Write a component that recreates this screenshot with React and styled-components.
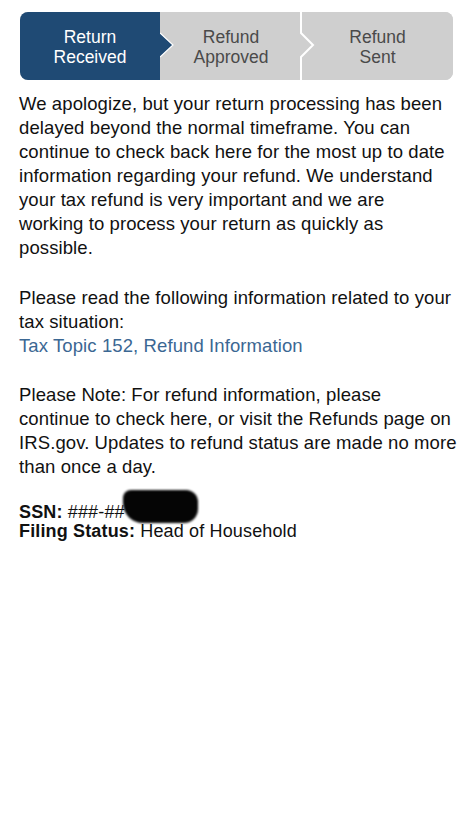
import React from 'react';
import styled, { createGlobalStyle } from 'styled-components';

const Global = createGlobalStyle`
  html, body { margin: 0; padding: 0; background: #fff; }
  body { font-family: "Liberation Sans", Arial, sans-serif; color: #111; }
`;

const Page = styled.div`
  width: 474px;
  min-height: 816px;
  padding: 12px 19px 0 19px;
  box-sizing: border-box;
`;

const Stepper = styled.div`
  display: flex;
  height: 68px;
  margin-left: 1px;
  width: 433px;
  border-radius: 8px;
  overflow: hidden;
  background: #cfcfcf;
`;

const Step = styled.div`
  position: relative;
  flex: ${p => (p.grow ? '1' : `0 0 ${p.w}px`)};
  display: flex;
  align-items: center;
  justify-content: center;
  text-align: center;
  font-size: 17.5px;
  line-height: 20px;
  padding-top: 2px;
  box-sizing: border-box;
  background: ${p => (p.active ? '#1f4a74' : '#cfcfcf')};
  color: ${p => (p.active ? '#fff' : '#4a4a4a')};
`;

const Chevron = styled.svg`
  position: absolute;
  top: 0;
  left: ${p => p.x}px;
  z-index: 2;
`;

const Body = styled.div`
  font-size: 18.5px;
  letter-spacing: 0.1px;
  line-height: 24px;
  margin-top: 12px;
  white-space: nowrap;
`;

const Para = styled.p`
  margin: 0 0 ${p => p.gap || 26}px 0;
`;

const Link = styled.a`
  color: #3b6793;
  text-decoration: none;
`;

const Info = styled.div`
  font-size: 18px;
  letter-spacing: 0.15px;
  line-height: 19px;
  margin-top: -2px;
  white-space: nowrap;
`;

const Label = styled.b`
  font-weight: 700;
`;

const Masked = styled.span`
  position: relative;
`;

const Blob = styled.span`
  position: absolute;
  left: -2px;
  top: -12px;
  width: 75px;
  height: 33px;
  background: #050505;
  border-radius: 8px 12px 14px 20px;
  filter: blur(1.2px);
`;

export default function App() {
  return (
    <Page>
      <Global />
      <Stepper>
        <Step active w={140}>
          Return<br />Received
          <Chevron x={140} width="16" height="68" viewBox="0 0 16 68">
            <polygon points="0,21 13,33 0,45" fill="#1f4a74" />
            <polyline points="0,21 13,33 0,45" fill="none" stroke="#fff" strokeWidth="1.2" />
          </Chevron>
        </Step>
        <Step w={142}>
          Refund<br />Approved
          <Chevron x={140} width="16" height="68" viewBox="0 0 16 68">
            <polyline points="1,0 1,21 13,33 1,45 1,68" fill="none" stroke="#fff" strokeWidth="2" />
          </Chevron>
        </Step>
        <Step grow>
          Refund<br />Sent
        </Step>
      </Stepper>
      <Body>
        <Para>
          We apologize, but your return processing has been<br />
          delayed beyond the normal timeframe. You can<br />
          continue to check back here for the most up to date<br />
          information regarding your refund. We understand<br />
          your tax refund is very important and we are<br />
          working to process your return as quickly as<br />
          possible.
        </Para>
        <Para gap={25}>
          Please read the following information related to your<br />
          tax situation:<br />
          <Link href="#">Tax Topic 152, Refund Information</Link>
        </Para>
        <Para gap={26}>
          Please Note: For refund information, please<br />
          continue to check here, or visit the Refunds page on<br />
          IRS.gov. Updates to refund status are made no more<br />
          than once a day.
        </Para>
      </Body>
      <Info>
        <div><Label>SSN:</Label> ###-##<Masked><Blob /></Masked></div>
        <div><Label>Filing Status:</Label> Head of Household</div>
      </Info>
    </Page>
  );
}
